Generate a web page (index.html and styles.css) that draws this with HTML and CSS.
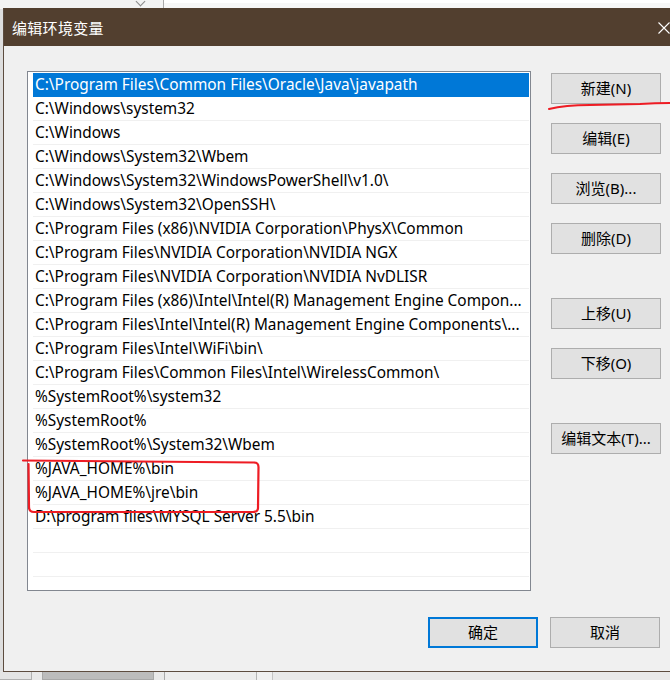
FILE: index.html
```html
<!DOCTYPE html>
<html lang="zh-CN">
<head>
<meta charset="utf-8">
<title>编辑环境变量</title>
<link rel="stylesheet" href="styles.css">
</head>
<body>
<div class="desktop">
  <div class="bg-top">
    <div class="bg-top-left"><span class="chev"></span></div>
    <div class="bg-top-right"></div>
  </div>
  <div class="bg-bottom">
    <div class="bb bb1"></div>
    <div class="bb bb2"></div>
    <div class="bb bb3"></div>
    <div class="bb bb4"></div>
  </div>

  <div class="dialog">
    <div class="titlebar">
      <span class="title">编辑环境变量</span>
      <svg class="close" width="12" height="12" viewBox="0 0 12 12"><path d="M0.5 0.5 L11.5 11.5 M11.5 0.5 L0.5 11.5" stroke="#fff" stroke-width="1.1" fill="none"/></svg>
    </div>
    <div class="body">
      <div class="main">
        <div class="list">
          <div class="row selected">C:\Program Files\Common Files\Oracle\Java\javapath</div>
          <div class="row">C:\Windows\system32</div>
          <div class="row">C:\Windows</div>
          <div class="row">C:\Windows\System32\Wbem</div>
          <div class="row">C:\Windows\System32\WindowsPowerShell\v1.0\</div>
          <div class="row">C:\Windows\System32\OpenSSH\</div>
          <div class="row">C:\Program Files (x86)\NVIDIA Corporation\PhysX\Common</div>
          <div class="row">C:\Program Files\NVIDIA Corporation\NVIDIA NGX</div>
          <div class="row">C:\Program Files\NVIDIA Corporation\NVIDIA NvDLISR</div>
          <div class="row">C:\Program Files (x86)\Intel\Intel(R) Management Engine Compon...</div>
          <div class="row">C:\Program Files\Intel\Intel(R) Management Engine Components\...</div>
          <div class="row">C:\Program Files\Intel\WiFi\bin\</div>
          <div class="row">C:\Program Files\Common Files\Intel\WirelessCommon\</div>
          <div class="row">%SystemRoot%\system32</div>
          <div class="row">%SystemRoot%</div>
          <div class="row">%SystemRoot%\System32\Wbem</div>
          <div class="row">%JAVA_HOME%\bin</div>
          <div class="row">%JAVA_HOME%\jre\bin</div>
          <div class="row">D:\program files\MYSQL Server 5.5\bin</div>
          <div class="row"></div>
          <div class="row"></div>
          <div class="row"></div>
        </div>
        <div class="side">
          <button class="btn">新建(N)</button>
          <button class="btn">编辑(E)</button>
          <button class="btn">浏览(B)...</button>
          <button class="btn">删除(D)</button>
          <button class="btn group">上移(U)</button>
          <button class="btn">下移(O)</button>
          <button class="btn group">编辑文本(T)...</button>
        </div>
      </div>
      <div class="footer">
        <button class="btn primary">确定</button>
        <button class="btn">取消</button>
      </div>
    </div>
  </div>

  <svg class="marks" width="670" height="680" viewBox="0 0 670 680">
    <path d="M549 109 Q565 105 590 105 L640 104 Q655 103 670 103" stroke="#ee1c24" stroke-width="2" fill="none" stroke-linecap="round"/>
    <path d="M23 460.5 L254 462.5 Q258.5 462.5 258.5 467 L258 508 Q258 512 253 512 L34 512 Q29 512 29 507 L28.5 464" stroke="#ee1c24" stroke-width="2.2" fill="none" stroke-linecap="round" stroke-linejoin="round"/>
  </svg>
</div>
</body>
</html>
```

FILE: styles.css
```css
* { box-sizing: border-box; }
html, body { margin: 0; padding: 0; }
body {
  width: 670px;
  height: 680px;
  overflow: hidden;
  background: #dedede;
  font-family: "Noto Sans", "Noto Sans CJK SC", sans-serif;
}
.desktop {
  position: relative;
  width: 670px;
  height: 680px;
  overflow: hidden;
}
.bg-top {
  display: flex;
  height: 9px;
}
.bg-top-left {
  position: relative;
  width: 164px;
  background: #f3f3f3;
  border-right: 1px solid #a9a9a9;
}
.chev {
  position: absolute;
  left: 137px;
  top: -2px;
  width: 7px;
  height: 7px;
  border-right: 1px solid #8a8a8a;
  border-bottom: 1px solid #8a8a8a;
  transform: rotate(45deg);
}
.bg-top-right {
  flex: 1;
  background: #f7f7f7;
  border-top: 3px solid #ffffff;
  border-bottom: 1px solid #e6e6e6;
}
.bg-bottom {
  position: absolute;
  left: 0;
  top: 671px;
  width: 670px;
  height: 9px;
  display: flex;
  background: #e9e9e9;
}
.bb1 { width: 32px; border-right: 1px solid #b0b0b0; border-bottom: 1px solid #b0b0b0; background: #e4e4e4; }
.bb2 { width: 112px; margin-left: 10px; background: #bcbcbc; border: 1px solid #a8a8a8; border-top: 0; }
.bb3 { width: 92px; margin-left: 10px; border-left: 1px solid #a9a9a9; background: #ececec; }
.bb4 { width: 17px; border-left: 1px solid #b4b4b4; border-right: 1px solid #c4c4c4; background: #f0f0f0; }

.dialog {
  position: absolute;
  left: 3px;
  top: 8px;
  width: 700px;
  height: 664px;
  background: #f0f0f0;
  border: 1px solid #5d4c3f;
  border-top-color: #523f2f;
  display: flex;
  flex-direction: column;
}
.titlebar {
  height: 37px;
  flex: none;
  background: #523f2f;
  display: flex;
  align-items: center;
  padding-left: 8px;
  position: relative;
}
.title {
  color: #ffffff;
  font-family: "Noto Sans CJK SC", sans-serif;
  font-size: 15px;
  letter-spacing: 0.3px;
  margin-top: -1px;
}
.close {
  position: absolute;
  left: 654px;
  top: 13px;
}
.body {
  flex: 1;
  padding: 25px 0 0 23px;
  display: flex;
  flex-direction: column;
}
.main {
  display: flex;
  gap: 20px;
}
.list {
  width: 504px;
  height: 520px;
  border: 1px solid #828790;
  background: #ffffff;
  padding: 1px 1px 0 5px;
  overflow: hidden;
}
.row {
  height: 24px;
  border-bottom: 1px solid #f0f0f0;
  font-size: 15.4px;
  line-height: 24px;
  color: #000000;
  padding-left: 2px;
  white-space: nowrap;
  overflow: hidden;
}
.row.selected {
  background: #0078d7;
  border-bottom-color: #0078d7;
  color: #ffffff;
}
.side {
  display: flex;
  flex-direction: column;
  gap: 19px;
  padding-top: 2px;
}
.btn {
  width: 110px;
  height: 31px;
  background: #e1e1e1;
  border: 1px solid #adadad;
  font-family: "Noto Sans", "Noto Sans CJK SC", sans-serif;
  font-size: 15px;
  color: #000000;
  padding: 0;
  line-height: 29px;
  margin: 0;
}
.btn.group { margin-top: 25px; }
.btn.primary { border: 2px solid #0078d7; line-height: 27px; }
.footer {
  display: flex;
  gap: 12px;
  margin-top: 26px;
  padding-left: 401px;
}
.marks {
  position: absolute;
  left: 0;
  top: 0;
  pointer-events: none;
}
```
